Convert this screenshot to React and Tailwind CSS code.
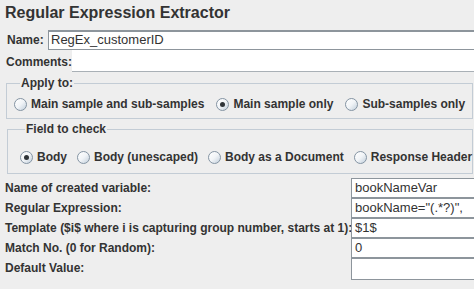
import React from 'react';

const Radio = ({ checked, label }) => (
  <div className="flex items-center gap-[4px] whitespace-nowrap">
    <div className="w-[13px] h-[13px] shrink-0 rounded-full border border-[#8494a3] bg-gradient-to-br from-white via-[#f1f4f7] to-[#c3d0dc] flex items-center justify-center">
      {checked && <div className="w-[5px] h-[5px] rounded-full bg-[#2f3438]" />}
    </div>
    <span className="font-bold">{label}</span>
  </div>
);

const Field = ({ value, tall }) => (
  <div
    className={`w-[140px] ${tall ? 'h-[22px]' : 'h-[20px]'} bg-white border border-[#8d959c] border-r-0 pl-[3px] text-[13px] font-normal leading-[18px] text-[#333] whitespace-nowrap`}
  >
    {value}
  </div>
);

const rows = [
  { label: 'Name of created variable:', value: 'bookNameVar' },
  { label: 'Regular Expression:', value: 'bookName="(.*?)",' },
  { label: 'Template ($i$ where i is capturing group number, starts at 1):', value: '$1$' },
  { label: 'Match No. (0 for Random):', value: '0' },
  { label: 'Default Value:', value: '', tall: true },
];

export default function App() {
  return (
    <div className="w-[474px] h-[289px] overflow-hidden bg-[#eeeeee] text-[12px] text-[#333] font-['Liberation_Sans',Arial,sans-serif]">
      {/* Title */}
      <div className="h-[30px] pl-[5px] pt-[4px] text-[16px] leading-[18px] font-bold text-[#333]">
        Regular Expression Extractor
      </div>

      {/* Name */}
      <div className="flex h-[20px]">
        <div className="w-[48px] pl-[7px] font-bold leading-[20px]">Name:</div>
        <div className="flex-1 bg-white border border-[#8d959c] border-r-0 shadow-[inset_0_1px_0_#8d959c] pl-[2px] text-[13px] leading-[18px] whitespace-nowrap">
          RegEx_customerID
        </div>
      </div>

      {/* Comments */}
      <div className="flex h-[22px]">
        <div className="w-[72px] pl-[6px] pt-[3px] font-bold leading-[18px]">Comments:</div>
        <div className="flex-1 bg-white border-b border-[#a9b0b6]" />
      </div>

      {/* Apply to */}
      <fieldset className="mt-[4px] ml-[6px] mr-[1px] border border-[#c3ccd5] pl-[7px] pt-[3px] pb-[3px]">
        <legend className="ml-[6px] px-[1px] font-bold leading-[14px]">Apply to:</legend>
        <div className="flex items-center h-[22px] gap-[12px]">
          <Radio label="Main sample and sub-samples" />
          <Radio checked label="Main sample only" />
          <Radio label="Sub-samples only" />
        </div>
      </fieldset>

      {/* Field to check */}
      <fieldset className="mt-[3px] ml-[7px] mr-[1px] border border-[#c3ccd5] pl-[12px] pt-[10px] pb-[5px]">
        <legend className="ml-[5px] px-[1px] font-bold leading-[14px]">Field to check</legend>
        <div className="flex items-center h-[22px] gap-[10px]">
          <Radio checked label="Body" />
          <Radio label="Body (unescaped)" />
          <Radio label="Body as a Document" />
          <Radio label="Response Header" />
        </div>
      </fieldset>

      {/* Extractor settings */}
      <div className="mt-[4px] grid grid-cols-[351px_1fr]">
        {rows.map((row, i) => (
          <React.Fragment key={i}>
            <div className="pl-[5px] font-bold leading-[20px] whitespace-nowrap">{row.label}</div>
            <Field value={row.value} tall={row.tall} />
          </React.Fragment>
        ))}
      </div>
    </div>
  );
}
